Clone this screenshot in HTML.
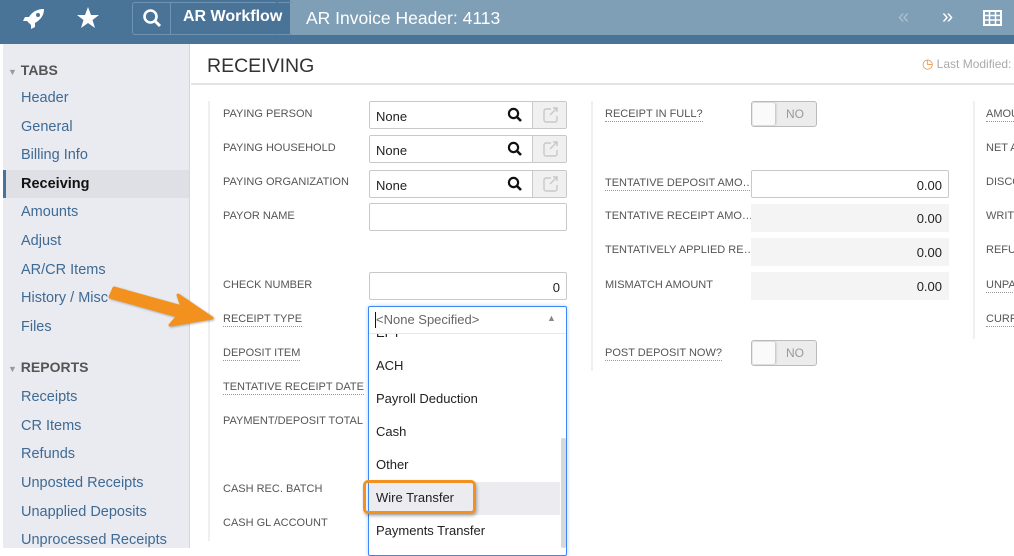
<!DOCTYPE html>
<html><head><meta charset="utf-8"><style>
*{box-sizing:border-box;margin:0;padding:0}
body{width:1014px;height:548px;overflow:hidden;background:#fff;font-family:"Liberation Sans",sans-serif;position:relative}
.a{position:absolute}
.top{left:0;top:0;width:1014px;height:44px;background:#4a7398}
.crumb{left:290px;top:0;width:724px;height:35px;background:#7f9fb7}
.lbl{position:absolute;font-size:11px;color:#555;white-space:nowrap}
.dot{border-bottom:1px dotted #999;padding-bottom:1px}
.inp{position:absolute;border:1px solid #c9c9c9;border-radius:2px;background:#fff;height:28px;font-size:13px;color:#222;padding:7px 6px}
.ro{position:absolute;background:#f4f4f4;height:28px;font-size:13px;color:#222;text-align:right;padding:7px 7px}
.side a{display:block;position:absolute;left:18px;font-size:14.5px;color:#3e6a93;text-decoration:none;white-space:nowrap}
.tog{position:absolute;width:66px;height:26px;border:1px solid #bbb;border-radius:3px;background:#ececec;font-size:12px;color:#999;padding:5px 0 0 34px}
.tog:before{content:"";position:absolute;left:1px;top:1px;width:22px;height:22px;background:#fafafa;border-radius:2px;box-shadow:1px 0 2px #bbb}
.opt{position:absolute;left:376px;font-size:13px;color:#222}
</style></head><body>
<div class="a top"></div>
<div class="a crumb"></div>
<div class="a" style="left:132px;top:2px;width:160px;height:33px;border:1px solid #6e93b3;border-right:none;border-radius:3px 0 0 3px"></div>
<div class="a" style="left:170px;top:2px;width:1px;height:33px;background:#6e93b3"></div>
<svg class="a" style="left:276px;top:0" width="16" height="35"><polygon points="0,0 14,17.5 0,35" fill="#4a7398"/></svg>
<svg class="a" style="left:22px;top:8px" width="24" height="22" viewBox="0 0 24 22"><path d="M22 1 C15 1 10 4 7 9 L3 9 L1 13 L5 13 L9 17 L9 21 L13 19 L13 15 C18 12 22 8 22 1Z" fill="#fff"/><circle cx="16" cy="7" r="2" fill="#4a7398"/></svg>
<svg class="a" style="left:75px;top:6px" width="26" height="24" viewBox="0 0 24 24"><polygon points="12,1 15,9 23,9 16.5,14 19,22 12,17 5,22 7.5,14 1,9 9,9" fill="#fff"/></svg>
<svg class="a" style="left:142px;top:8px" width="20" height="20" viewBox="0 0 20 20"><circle cx="8.5" cy="8.5" r="6" stroke="#fff" stroke-width="2.6" fill="none"/><line x1="13" y1="13" x2="18" y2="18" stroke="#fff" stroke-width="3"/></svg>
<div class="a" style="left:183px;top:8px;color:#fff;font-weight:bold;font-size:16px">AR Workflow</div>
<div class="a" style="left:306px;top:8px;color:#fff;font-size:17.5px">AR Invoice Header: 4113</div>
<div class="a" style="left:898px;top:6px;color:#a9bfd1;font-size:20px">«</div>
<div class="a" style="left:942px;top:6px;color:#fff;font-size:20px">»</div>
<svg class="a" style="left:983px;top:10px" width="19" height="16" viewBox="0 0 19 16"><rect x="1" y="1" width="17" height="14" fill="none" stroke="#fff" stroke-width="2"/><path d="M1 5.5H18M1 10H18M6.5 1V15M12.5 1V15" stroke="#fff" stroke-width="1.5"/></svg>

<div class="a side" style="left:3px;top:44px;width:187px;height:504px;background:#eaebf1;border-right:1px solid #d4d6dc">
<div class="a" style="left:5px;top:18px;font-size:14px;font-weight:bold;color:#555"><span style="font-size:9px;color:#999">▼</span> TABS</div>
<a style="top:46px">Header</a><a style="top:75px">General</a><a style="top:103px">Billing Info</a>
<div class="a" style="left:0;top:126px;width:186px;height:28px;background:#dfe0e6;border-left:3px solid #4a7398"></div>
<a style="top:132px;color:#111;font-weight:bold">Receiving</a>
<a style="top:160px">Amounts</a><a style="top:189px">Adjust</a><a style="top:218px">AR/CR Items</a><a style="top:246px">History / Misc</a><a style="top:275px">Files</a>
<div class="a" style="left:5px;top:315px;font-size:14px;font-weight:bold;color:#555"><span style="font-size:9px;color:#999">▼</span> REPORTS</div>
<a style="top:345px">Receipts</a><a style="top:374px">CR Items</a><a style="top:402px">Refunds</a><a style="top:431px">Unposted Receipts</a><a style="top:460px">Unapplied Deposits</a><a style="top:488px">Unprocessed Receipts</a>
</div>

<div class="a" style="left:207px;top:55px;font-size:19.5px;color:#333">RECEIVING</div>
<div class="a" style="left:922px;top:56px;font-size:12px;color:#aaa;white-space:nowrap"><span style="color:#f08a2c;font-size:13px">◷</span> Last Modified:</div>
<div class="a" style="left:191px;top:83px;width:823px;height:2px;background:#e4e4e4"></div>
<div class="a" style="left:208px;top:101px;width:2px;height:440px;background:#efefef"></div>
<div class="a" style="left:591px;top:101px;width:2px;height:270px;background:#efefef"></div>
<div class="a" style="left:973px;top:101px;width:2px;height:238px;background:#efefef"></div>

<div class="lbl" style="left:223px;top:108px">PAYING PERSON</div>
<div class="lbl" style="left:223px;top:142px">PAYING HOUSEHOLD</div>
<div class="lbl" style="left:223px;top:176px">PAYING ORGANIZATION</div>
<div class="lbl" style="left:223px;top:210px">PAYOR NAME</div>
<div class="lbl" style="left:223px;top:279px">CHECK NUMBER</div>
<div class="lbl" style="left:223px;top:313px"><span class="dot">RECEIPT TYPE</span></div>
<div class="lbl" style="left:223px;top:347px"><span class="dot">DEPOSIT ITEM</span></div>
<div class="lbl" style="left:223px;top:381px"><span class="dot">TENTATIVE RECEIPT DATE</span></div>
<div class="lbl" style="left:223px;top:415px">PAYMENT/DEPOSIT TOTAL</div>
<div class="lbl" style="left:223px;top:483px">CASH REC. BATCH</div>
<div class="lbl" style="left:223px;top:517px">CASH GL ACCOUNT</div>

<div class="inp" style="left:369px;top:101px;width:198px">None</div>
<div class="inp" style="left:369px;top:135px;width:198px">None</div>
<div class="inp" style="left:369px;top:170px;width:198px">None</div>
<div class="inp" style="left:369px;top:203px;width:198px"></div>
<div class="inp" style="left:369px;top:272px;width:198px;text-align:right">0</div>
<svg width="0" height="0" style="position:absolute"><defs><g id="mg"><circle cx="6.5" cy="6.5" r="4.6" stroke="#111" stroke-width="2.2" fill="none"/><line x1="10" y1="10" x2="14" y2="14" stroke="#111" stroke-width="2.6"/></g><g id="ex"><path d="M10 2H5a2 2 0 0 0-2 2v9a2 2 0 0 0 2 2h9a2 2 0 0 0 2-2V9M9 8L16 1M12 1h4v4" fill="none" stroke="#c8c8c8" stroke-width="1.4"/></g></defs></svg>
<div class="a" style="left:532px;top:102px;width:34px;height:26px;background:#f0f0f0;border-left:1px solid #c9c9c9"></div>
<div class="a" style="left:532px;top:136px;width:34px;height:26px;background:#f0f0f0;border-left:1px solid #c9c9c9"></div>
<div class="a" style="left:532px;top:171px;width:34px;height:26px;background:#f0f0f0;border-left:1px solid #c9c9c9"></div>
<svg class="a" style="left:507px;top:107px" width="16" height="16"><use href="#mg"/></svg>
<svg class="a" style="left:507px;top:141px" width="16" height="16"><use href="#mg"/></svg>
<svg class="a" style="left:507px;top:176px" width="16" height="16"><use href="#mg"/></svg>
<svg class="a" style="left:541px;top:107px" width="17" height="17"><use href="#ex"/></svg>
<svg class="a" style="left:541px;top:141px" width="17" height="17"><use href="#ex"/></svg>
<svg class="a" style="left:541px;top:176px" width="17" height="17"><use href="#ex"/></svg>

<div class="a" style="left:368px;top:306px;width:199px;height:250px;border:1px solid #3d86f5;border-radius:2px;background:#fff;box-shadow:0 0 4px #b9d2f7"></div>
<div class="a" style="left:369px;top:333px;width:197px;height:1px;background:#e8e8e8"></div>
<div class="a" style="left:375px;top:312px;width:1px;height:16px;background:#111"></div>
<div class="a" style="left:376px;top:312px;font-size:13px;color:#666">&lt;None Specified&gt;</div>
<div class="a" style="left:547px;top:313px;font-size:9px;color:#888">▲</div>
<div class="a" style="left:376px;top:334px;width:40px;height:5px;overflow:hidden"><div style="position:relative;top:-9px;font-size:13px;color:#222">EFT</div></div>
<div class="opt" style="top:358px">ACH</div>
<div class="opt" style="top:391px">Payroll Deduction</div>
<div class="opt" style="top:424px">Cash</div>
<div class="opt" style="top:457px">Other</div>
<div class="a" style="left:369px;top:482px;width:191px;height:33px;background:#ebebf0"></div>
<div class="a" style="left:561px;top:438px;width:5px;height:110px;background:#d8d8d8;border-radius:2px"></div>
<div class="a" style="left:363px;top:480px;width:113px;height:34px;border:3px solid #f2911e;border-radius:5px;box-shadow:1px 2px 3px rgba(0,0,0,.3)"></div>
<div class="opt" style="top:490px">Wire Transfer</div>
<div class="opt" style="top:523px">Payments Transfer</div>

<svg class="a" style="left:106px;top:280px" width="110" height="50" viewBox="0 0 110 50"><path d="M8 8 L76 27 L72 15 L106 38 L64 45 L72 36 L4 17 Z" fill="#f2911e" stroke="#f2911e" stroke-width="3" stroke-linejoin="round" style="filter:drop-shadow(1px 1px 1px rgba(0,0,0,.3))"/></svg>

<div class="lbl" style="left:605px;top:108px"><span class="dot">RECEIPT IN FULL?</span></div>
<div class="lbl" style="left:605px;top:177px"><span class="dot">TENTATIVE DEPOSIT AMO…</span></div>
<div class="lbl" style="left:605px;top:210px">TENTATIVE RECEIPT AMO…</div>
<div class="lbl" style="left:605px;top:244px">TENTATIVELY APPLIED RE…</div>
<div class="lbl" style="left:605px;top:279px">MISMATCH AMOUNT</div>
<div class="lbl" style="left:605px;top:347px"><span class="dot">POST DEPOSIT NOW?</span></div>
<div class="tog" style="left:751px;top:101px">NO</div>
<div class="tog" style="left:751px;top:340px">NO</div>
<div class="inp" style="left:751px;top:170px;width:198px;text-align:right">0.00</div>
<div class="ro" style="left:751px;top:204px;width:198px">0.00</div>
<div class="ro" style="left:751px;top:238px;width:198px">0.00</div>
<div class="ro" style="left:751px;top:272px;width:198px">0.00</div>

<div class="lbl" style="left:986px;top:108px"><span class="dot">AMOUNT</span></div>
<div class="lbl" style="left:986px;top:142px">NET AMT</div>
<div class="lbl" style="left:986px;top:176px">DISCOUNT</div>
<div class="lbl" style="left:986px;top:210px">WRITE</div>
<div class="lbl" style="left:986px;top:244px">REFUND</div>
<div class="lbl" style="left:986px;top:279px"><span class="dot">UNPAID</span></div>
<div class="lbl" style="left:986px;top:313px"><span class="dot">CURRENT</span></div>
</body></html>
